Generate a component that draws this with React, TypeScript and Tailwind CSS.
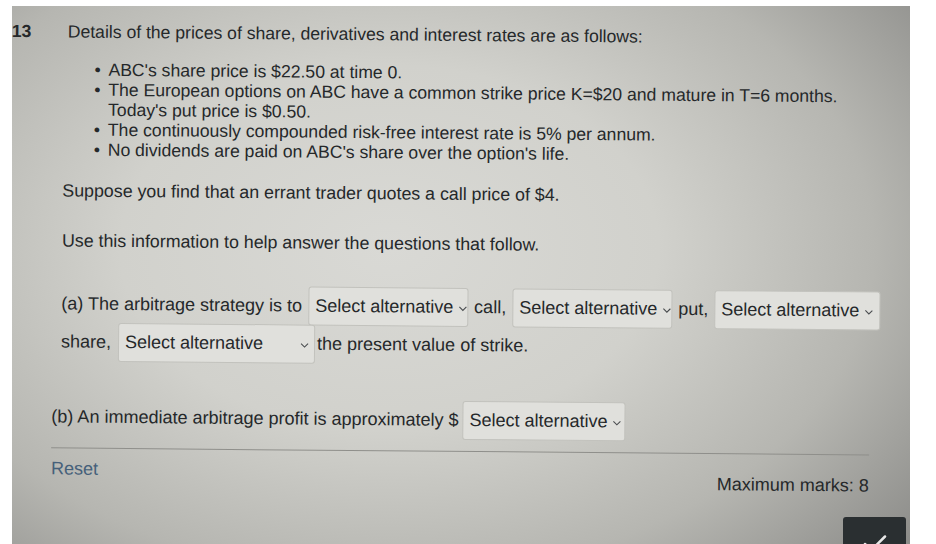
import { Check } from 'lucide-react'

const Chevron = () => (
  <svg width="9" height="6" viewBox="0 0 9 6" className="ml-[5px] mt-[2px] shrink-0">
    <polyline points="1,1 4.5,4.5 8,1" fill="none" stroke="#4a4d50" strokeWidth="1.1" />
  </svg>
)

const Select = ({ width, spread = false }: { width: string; spread?: boolean }) => (
  <span
    className={`inline-flex items-center h-[39px] rounded-[3px] border border-[#c2c2bd] bg-[#e0e0dc] pl-[6px] pr-[5px] shrink-0 ${width} ${
      spread ? 'justify-between' : ''
    }`}
  >
    <span>Select alternative</span>
    <Chevron />
  </span>
)

const bullets = [
  ["ABC's share price is $22.50 at time 0."],
  [
    'The European options on ABC have a common strike price K=$20 and mature in T=6 months.',
    "Today's put price is $0.50.",
  ],
  ['The continuously compounded risk-free interest rate is 5% per annum.'],
  ["No dividends are paid on ABC's share over the option's life."],
]

export default function App() {
  return (
    <div className="w-[936px] h-[544px] bg-white overflow-hidden font-['Liberation_Sans',Arial,sans-serif] text-[18px] text-[#25282a]">
      <div className="ml-[12px] mt-[6px] w-[898px] h-[538px] flex flex-col bg-[radial-gradient(ellipse_75%_85%_at_42%_45%,#d9d9d5_0%,#d1d1cc_40%,#b6b6b1_72%,#8d8d8a_100%)]">
        <div className="origin-top-left rotate-[0.5deg]">
          <div className="flex pt-[15px] leading-[20px] text-[17.6px]">
            <span className="w-[56px] font-bold">13</span>
            <span>Details of the prices of share, derivatives and interest rates are as follows:</span>
          </div>

          <ul className="mt-[18px] ml-[83px] leading-[20px] text-[17.6px]">
            {bullets.map((lines, i) => (
              <li key={i} className="flex">
                <span className="w-[14px]">•</span>
                <div>
                  {lines.map((l) => (
                    <div key={l}>{l}</div>
                  ))}
                </div>
              </li>
            ))}
          </ul>

          <p className="mt-[21px] ml-[52px] leading-[20px] text-[17.8px]">
            Suppose you find that an errant trader quotes a call price of $4.
          </p>
          <p className="mt-[30px] ml-[52px] leading-[20px] text-[17.8px]">
            Use this information to help answer the questions that follow.
          </p>

          <div className="mt-[34px] ml-[52px] flex items-center gap-[6px] whitespace-nowrap">
            <span>(a) The arbitrage strategy is to</span>
            <Select width="w-[160px]" />
            <span>call,</span>
            <Select width="w-[160px]" />
            <span>put,</span>
            <Select width="w-[166px]" />
          </div>
          <div className="-mt-[1px] ml-[52px] flex items-center whitespace-nowrap">
            <span className="mr-[7px]">share,</span>
            <Select width="w-[197px]" spread />
            <span className="ml-[2px]">the present value of strike.</span>
          </div>

          <div className="mt-[36px] ml-[43px] flex items-center gap-[4px] whitespace-nowrap">
            <span>(b) An immediate arbitrage profit is approximately $</span>
            <Select width="w-[163px]" />
          </div>

          <div className="mt-[11px] ml-[43px] w-[818px] border-t border-[#8f8f8b]" />

          <div className="ml-[43px] w-[818px] mt-[10px] flex justify-between items-start leading-[20px]">
            <button className="text-[#45607a]">Reset</button>
            <span className="mt-[10px]">Maximum marks: 8</span>
          </div>
        </div>

        <div className="mt-auto flex justify-end">
          <div className="w-[63px] h-[27px] mr-[4px] rounded-t-[3px] bg-[#2a2f31] flex justify-center pt-[12px] overflow-hidden">
            <Check size={30} color="#e8e8e8" strokeWidth={2} className="shrink-0" />
          </div>
        </div>
      </div>
    </div>
  )
}
